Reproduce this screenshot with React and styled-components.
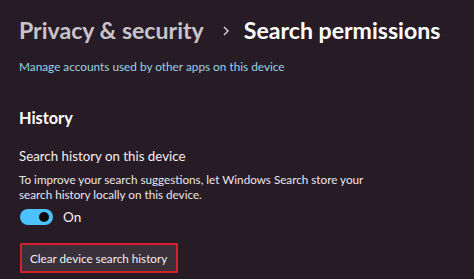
import React from "react";
import styled, { createGlobalStyle } from "styled-components";

const Global = createGlobalStyle`
  html, body { margin: 0; padding: 0; background: #271c26; }
  body { width: 474px; height: 279px; overflow: hidden; font-family: "Lato", "Open Sans", sans-serif; }
`;

const Page = styled.div`
  box-sizing: border-box;
  width: 474px;
  height: 279px;
  padding: 13px 0 0 19px;
  background: #271c26;
  color: #f2eef2;
  display: flex;
  flex-direction: column;
`;

const Breadcrumb = styled.div`
  display: flex;
  align-items: center;
  font-size: 23.1px;
  font-weight: 700;
  line-height: 34px;
  white-space: nowrap;
`;

const Crumb = styled.span`
  color: ${(p) => (p.$current ? "#ffffff" : "#c9c3c9")};
`;

const Chevron = styled.svg`
  flex: none;
  width: 8px;
  height: 10px;
  margin: 2px 14px 0 18px;
`;

const Link = styled.a`
  margin-top: 12px;
  font-size: 11.8px;
  line-height: 16px;
  color: #99d3e4;
  text-decoration: none;
`;

const SectionTitle = styled.h2`
  margin: 32px 0 0;
  font-size: 16.3px;
  font-weight: 700;
  line-height: 22px;
  color: #ffffff;
`;

const SettingTitle = styled.div`
  margin-top: 18px;
  font-size: 13.3px;
  line-height: 18px;
  color: #f2eef2;
`;

const Description = styled.p`
  margin: 7px 0 0;
  width: 400px;
  font-size: 11.7px;
  line-height: 15px;
  color: #ebe6eb;
`;

const ToggleRow = styled.div`
  display: flex;
  align-items: center;
  gap: 10px;
  margin-top: 7px;
  margin-left: 1px;
  font-size: 13.5px;
  color: #f2eef2;
`;

const Track = styled.span`
  position: relative;
  display: inline-block;
  width: 33px;
  height: 16px;
  border-radius: 8px;
  background: #4cc2ff;
`;

const Knob = styled.span`
  position: absolute;
  top: 3px;
  right: 4px;
  width: 10px;
  height: 10px;
  border-radius: 50%;
  background: #0b0b0b;
`;

const Button = styled.button`
  align-self: flex-start;
  box-sizing: border-box;
  margin-top: 18px;
  margin-left: 1px;
  height: 30px;
  padding: 0 9px 0 8px;
  background: #3a3039;
  border: 2px solid #d81f2c;
  border-radius: 1px;
  font-family: inherit;
  font-size: 11.7px;
  color: #f4f0f4;
  white-space: nowrap;
`;

export default function App() {
  return (
    <>
      <Global />
      <Page>
        <Breadcrumb>
          <Crumb>Privacy &amp; security</Crumb>
          <Chevron viewBox="0 0 8 10">
            <path d="M2 1 L6 5 L2 9" fill="none" stroke="#d9d4d9" strokeWidth="1.4" />
          </Chevron>
          <Crumb $current>Search permissions</Crumb>
        </Breadcrumb>
        <Link href="#">Manage accounts used by other apps on this device</Link>
        <SectionTitle>History</SectionTitle>
        <SettingTitle>Search history on this device</SettingTitle>
        <Description>
          To improve your search suggestions, let Windows Search store your
          <br />
          search history locally on this device.
        </Description>
        <ToggleRow>
          <Track>
            <Knob />
          </Track>
          On
        </ToggleRow>
        <Button>Clear device search history</Button>
      </Page>
    </>
  );
}
